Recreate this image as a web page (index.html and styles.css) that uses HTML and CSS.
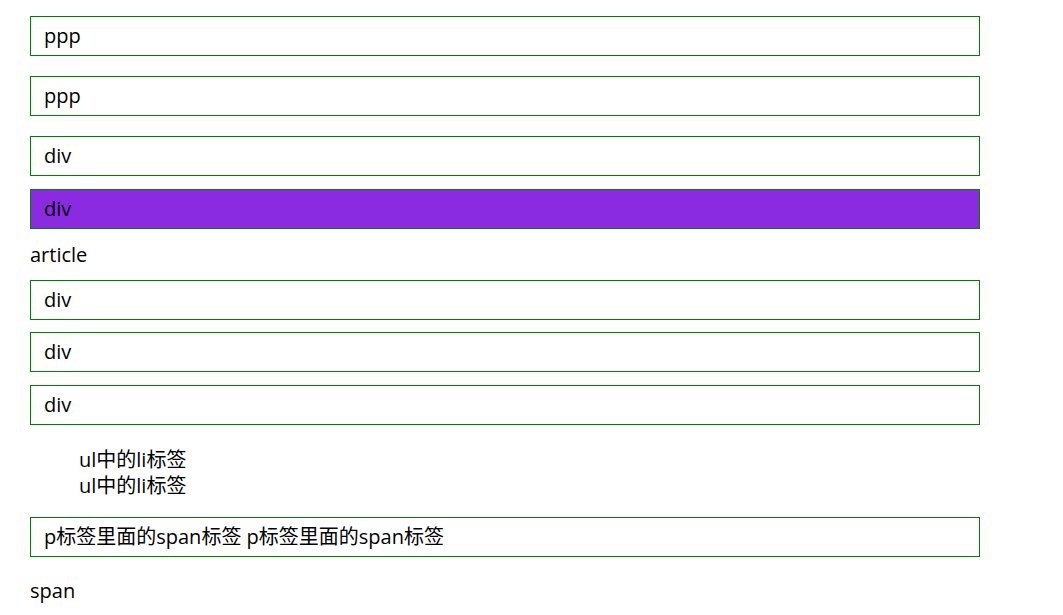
FILE: index.html
```html
<!DOCTYPE html>
<html lang="zh">
<head>
<meta charset="utf-8">
<title>selectors</title>
<link rel="stylesheet" href="styles.css">
</head>
<body>
<main class="page">
  <p class="box gap-20">ppp</p>
  <p class="box gap-20">ppp</p>
  <div class="box gap-13">div</div>
  <div class="box purple gap-13">div</div>
  <article class="plain gap-12">article</article>
  <div class="box gap-12">div</div>
  <div class="box gap-13">div</div>
  <div class="box">div</div>
  <ul class="list">
    <li>ul中的li标签</li>
    <li>ul中的li标签</li>
  </ul>
  <p class="box gap-21"><span>p标签里面的span标签</span> <span>p标签里面的span标签</span></p>
  <span class="plain">span</span>
</main>
</body>
</html>
```

FILE: styles.css
```css
html, body {
  margin: 0;
  padding: 0;
  background: #ffffff;
}

body {
  font-family: "Open Sans", "Noto Sans CJK SC", sans-serif;
  font-size: 20px;
  color: #000000;
}

.page {
  display: flex;
  flex-direction: column;
  align-items: flex-start;
  padding: 16px 30px 0 30px;
}

.box {
  box-sizing: border-box;
  width: 950px;
  height: 40px;
  margin: 0;
  padding: 0 13px;
  border: 1px solid #008000;
  line-height: 38px;
  white-space: nowrap;
}

.purple {
  background: #8a2be2;
}

.plain {
  display: block;
  line-height: 26px;
  margin: 0;
}

.list {
  list-style: none;
  margin: 22px 0 18px 0;
  padding: 0 0 0 49px;
  line-height: 26px;
}

.gap-20 { margin-bottom: 20px; }
.gap-21 { margin-bottom: 21px; }
.gap-13 { margin-bottom: 13px; }
.gap-12 { margin-bottom: 12px; }
```
